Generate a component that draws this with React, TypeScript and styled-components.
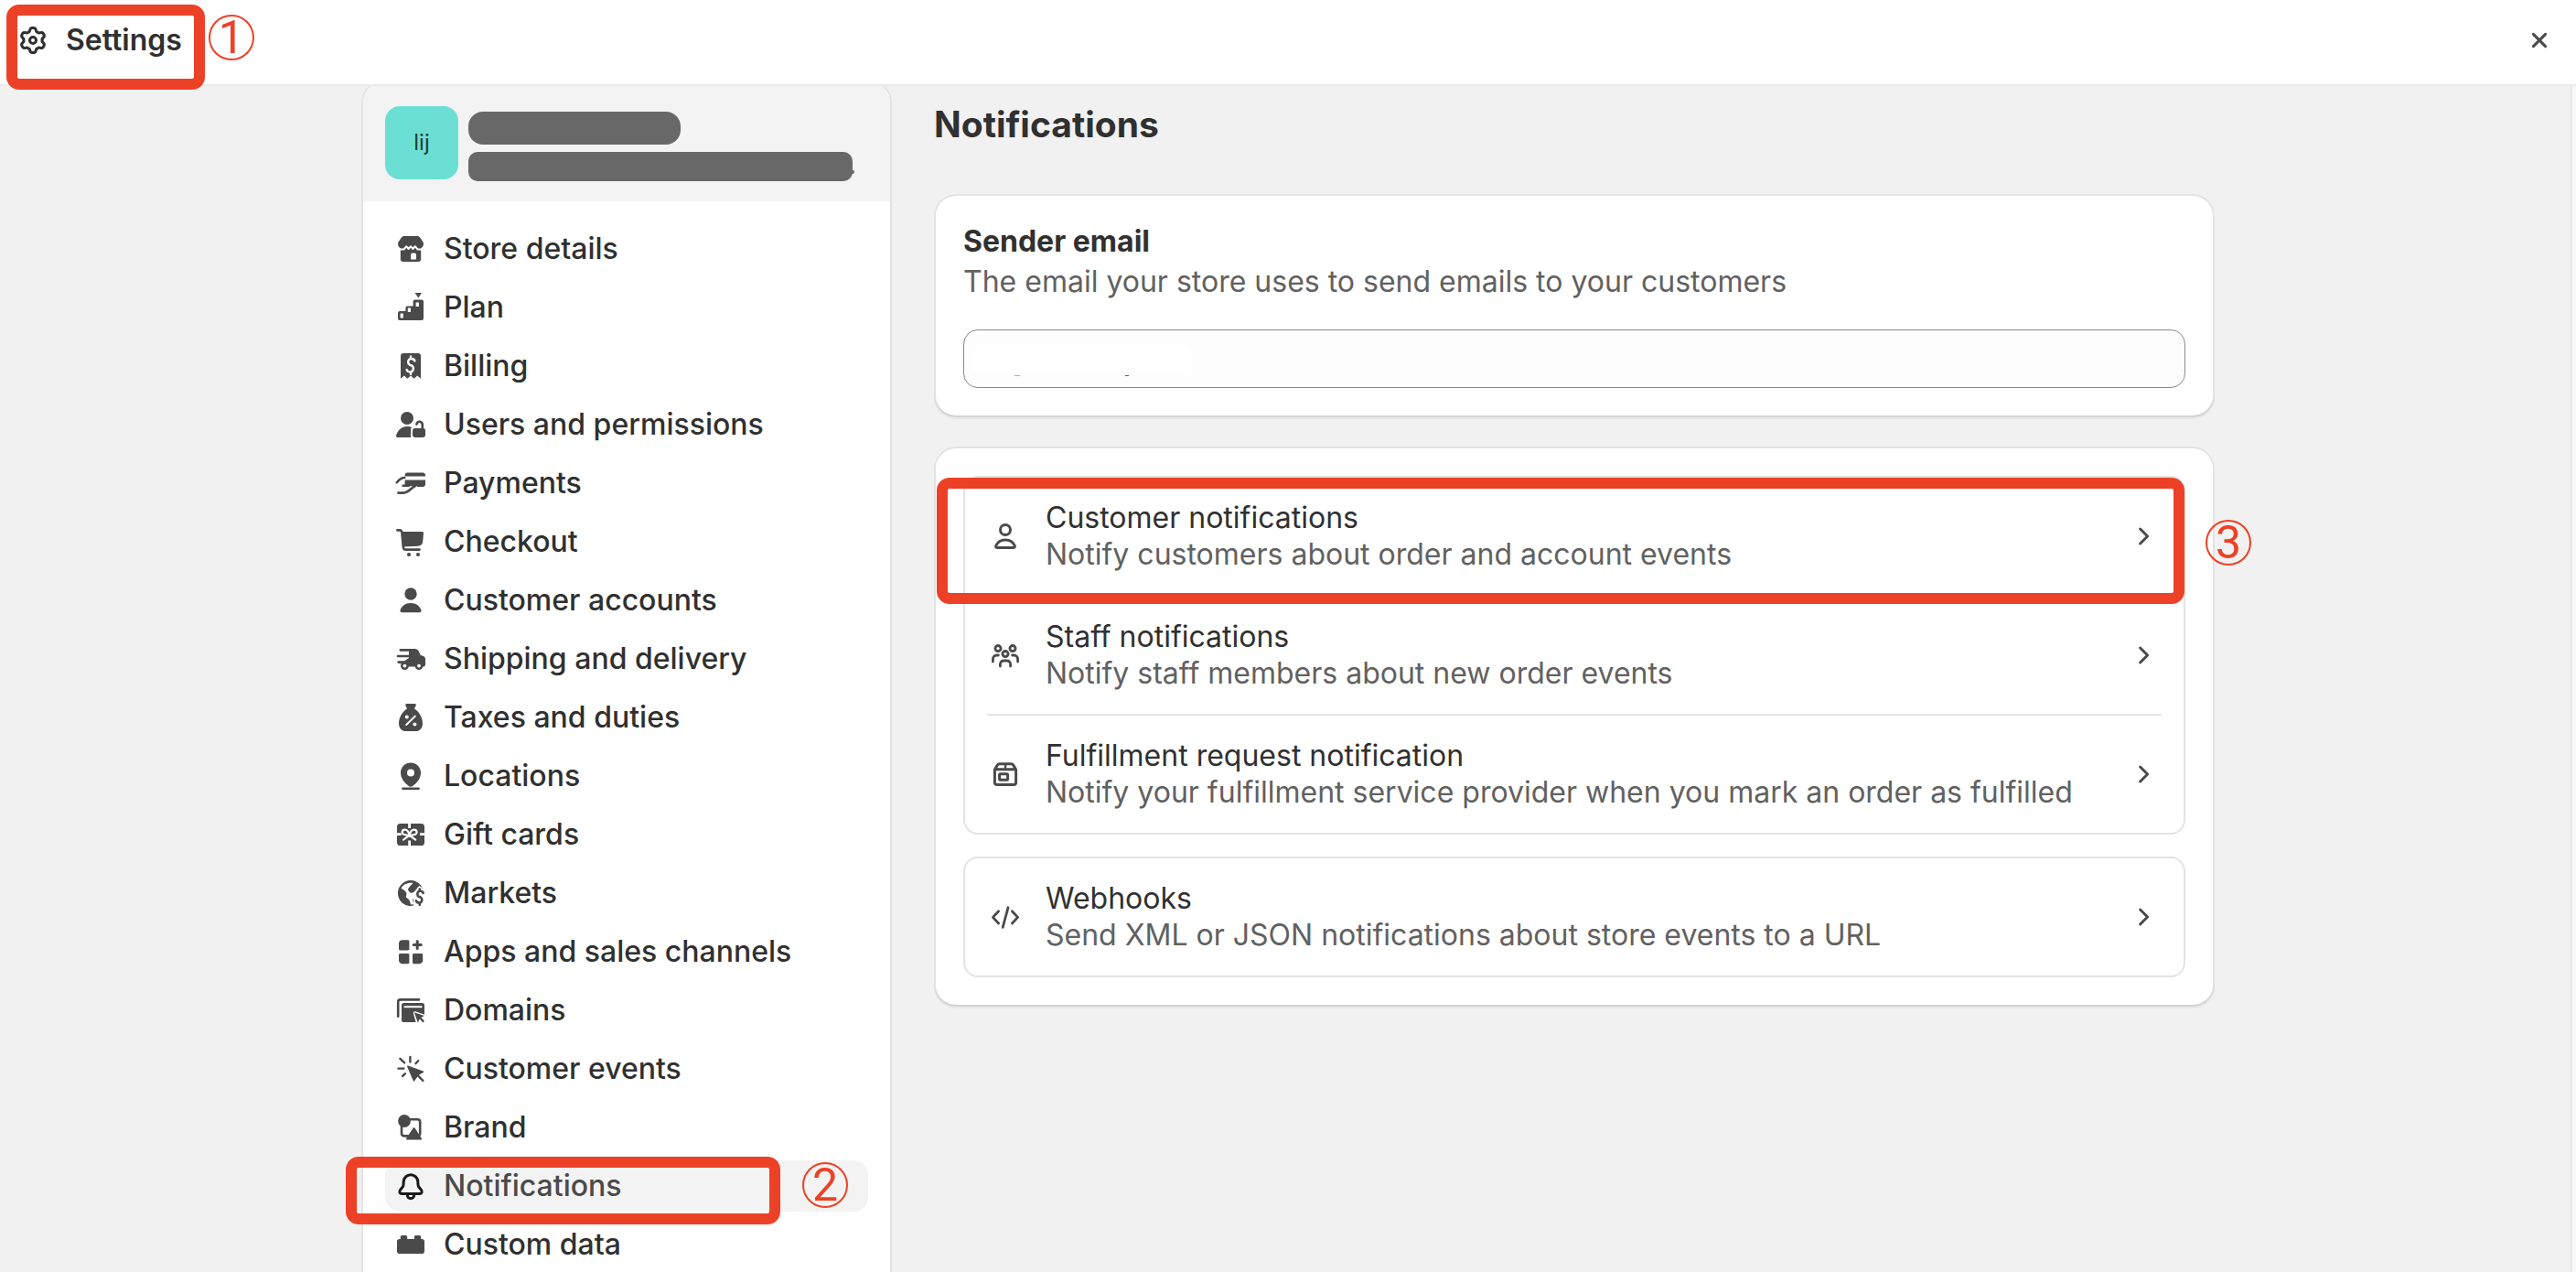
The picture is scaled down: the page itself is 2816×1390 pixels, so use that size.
import React from "react";
import styled, { createGlobalStyle, css } from "styled-components";

const color = {
  page: "#f1f1f1",
  surface: "#ffffff",
  subtle: "#f3f3f3",
  line: "#e3e3e3",
  headerLine: "#ebebeb",
  text: "#303030",
  muted: "#616161",
  icon: "#4a4a4a",
  strong: "#1a1a1a",
  mark: "#ec4126",
  redact: "#686868",
  avatar: "#6cdfd5",
};

const GlobalStyle = createGlobalStyle`
  *, *::before, *::after { box-sizing: border-box; }
  body {
    margin: 0;
    background: ${color.page};
    color: ${color.text};
    font-family: Inter, "Liberation Sans", sans-serif;
    font-size: 32px;
    line-height: 40px;
  }
  h1, h2, p, ul { margin: 0; padding: 0; }
  ul { list-style: none; }
  a { color: inherit; text-decoration: none; }
`;

/* ---------- Icons (20 unit grid) ---------- */

const Glyph = styled.svg<{ $tone?: string }>`
  display: block;
  flex: none;
  width: 40px;
  height: 40px;
  color: ${(p) => p.$tone ?? color.icon};
  fill: currentColor;
`;

const line = {
  fill: "none",
  stroke: "currentColor",
  strokeWidth: 1.5,
  strokeLinecap: "round" as const,
  strokeLinejoin: "round" as const,
};
const cut = { ...line, stroke: "#fff", strokeWidth: 1 };

const dollar = "M2.2 1.2C2 .5 1.3 0 .3 0h-.6a2 2 0 0 0 0 3.6h.6a2 2 0 0 1 0 3.6h-.6c-1 0-1.7-.5-1.9-1.2M0-1.3V0M0 7.2v1.3";

const gearPath = (() => {
  const pt = (r: number, deg: number) => {
    const a = (deg * Math.PI) / 180;
    return `${(10 + r * Math.cos(a)).toFixed(2)} ${(10 + r * Math.sin(a)).toFixed(2)}`;
  };
  let d = "";
  for (let k = 0; k < 6; k++) {
    const t = -90 + k * 60;
    d += `${k ? "L" : "M"}${pt(5.5, t - 18)}Q${pt(6.75, t - 13)} ${pt(6.75, t - 5)}L${pt(6.75, t + 5)}Q${pt(6.75, t + 13)} ${pt(5.5, t + 18)}Q${pt(4.7, t + 24)} ${pt(5.2, t + 30)}Q${pt(4.7, t + 36)} ${pt(5.5, t + 42)}`;
  }
  return d + "Z";
})();

const icons = {
  gear: (
    <>
      <path {...line} d={gearPath} />
      <circle {...line} cx="10" cy="10" r="1.75" />
    </>
  ),
  close: <path {...line} d="M6.7 6.7l6.6 6.6M13.3 6.7l-6.6 6.6" />,
  chevron: <path {...line} d="M8.3 6l4 4-4 4" />,
  store: (
    <>
      <path d="M6.4 3h7.2c.6 0 1.1.3 1.5.8l1.4 2.1c.3.4.5.9.5 1.4 0 1.500-1 2.400-2.200 2.400H5.200C4 9.700 3 8.800 3 7.300c0-.5.2-1 .5-1.400l1.400-2.100C5.300 3.300 5.800 3 6.400 3z" />
      <path d="M4.400 9h11.200v6.600c0 .8-.6 1.400-1.400 1.400H5.800c-.8 0-1.400-.6-1.400-1.400z" />
      <path {...cut} d="M4 10.300h2.200L7.600 8.600 8.800 10 10 8.600l1.200 1.400 1.200-1.400 1.400 1.700H16" />
      <path fill="#fff" d="M10 13.300a1 1 0 0 1 1-1h1a1 1 0 0 1 1 1v2.500h-3z" />
    </>
  ),
  plan: (
    <>
      <path d="M12.300 2h3.700l-1.850 2.700z" />
      <path d="M3 13a1 1 0 0 1 1-1h3.200v-1.800a1 1 0 0 1 1-1h3.100V6.700a1 1 0 0 1 1-1H16a1 1 0 0 1 1 1V16a1 1 0 0 1-1 1H4a1 1 0 0 1-1-1z" />
      <path fill="#fff" d="M4.300 13.200h1.600v2.500H4.300zM8.400 10.200H10v2.300H8.400zM12.800 7.200h1.700v2.300h-1.700z" />
    </>
  ),
  billing: (
    <>
      <path d="M5.900 3h8.200c.8 0 1.400.6 1.400 1.400v12.500l-1.900-1.700-1.800 1.700L10 15.200l-1.800 1.700-1.800-1.700-1.900 1.700V4.400C4.500 3.600 5.100 3 5.900 3z" />
      <path {...cut} strokeWidth={1.2} transform="translate(10 6)" d={dollar} />
    </>
  ),
  users: (
    <>
      <circle cx="8" cy="6.500" r="3.500" />
      <path d="M8 11c1 0 1.900.2 2.500.5-.3.400-.5.800-.5 1.300V17H3c-.8 0-1.200-.6-.9-1.300C3 13 5 11 8 11z" />
      <rect x="11" y="12" width="7" height="5" rx="1.200" />
      <path {...line} strokeWidth={1.300} d="M16.400 12.500V10.200a1.600 1.600 0 0 0-3.200-.4" />
    </>
  ),
  payments: (
    <>
      <path d="M8.200 4.200h8.400c.8 0 1.400.6 1.400 1.400v.7H6.800v-.7c0-.8.6-1.400 1.400-1.400zM6.800 8.200H18v2.400c0 .8-.6 1.400-1.400 1.400H6.800z" />
      <path {...line} strokeWidth={1.300} d="M2.400 9.600c1.300-1.700 2.400-2.600 4.200-2.600M5.800 11.400h3.600" />
      <path {...cut} strokeWidth={1.200} d="M9.800 12.200l3.200-.2" />
      <path {...line} strokeWidth={1.400} d="M3.200 15.300h2.900c2.600 0 3.900-2.600 6.600-4" />
    </>
  ),
  cart: (
    <>
      <path {...line} strokeWidth={1.300} d="M2.700 3.700h1.200c.7 0 1.200.5 1.300 1.200l.7 8c.1.800.6 1.400 1.400 1.400h7.500" />
      <path d="M5 4.500h11.200c.5 0 .8.400.8.900l-.4 4.500c-.1 1.400-1.100 2.400-2.500 2.500l-8.500.400z" />
      <circle cx="9" cy="17" r="1.050" />
      <circle cx="14" cy="17" r="1.050" />
    </>
  ),
  person: (
    <>
      <circle cx="10" cy="6.500" r="3.350" />
      <path d="M10 11.500c3 0 4.800 1.600 5.700 3.700.3.700-.2 1.400-.9 1.400H5.200c-.7 0-1.200-.7-.9-1.400.9-2.100 2.700-3.700 5.700-3.700z" />
    </>
  ),
  truck: (
    <>
      <path d="M9 4.500h3.300c.9 0 1.600.5 2 1.300l1 2.100 1.800.7c.6.300.9.800.9 1.400v3c0 .8-.5 1.300-1.300 1.300H5.500l-.8-1.800L9 9.500z" />
      <path {...line} strokeWidth={1.300} d="M4.400 5.200h6M3 8.500h7M3.300 11.800h6" />
      <circle cx="6.700" cy="13.800" r="2.200" />
      <circle cx="14.500" cy="13.800" r="2.200" />
      <circle cx="6.700" cy="13.800" r=".95" fill="#fff" />
      <circle cx="14.500" cy="13.800" r=".95" fill="#fff" />
    </>
  ),
  taxes: (
    <>
      <path d="M7.800 2.500h4.400c.6 0 .9.600.6 1.100L12 5.200c2.400 1.500 4.500 4.500 4.500 8 0 2.600-1.500 4.300-4 4.300h-5c-2.500 0-4-1.700-4-4.300 0-3.500 2.100-6.500 4.500-8l-.8-1.600c-.3-.5 0-1.100.6-1.100z" />
      <path {...cut} d="M7.600 14l4.800-4.700" />
      <circle cx="7.900" cy="9.700" r="1" fill="#fff" />
      <circle cx="12.200" cy="13.700" r="1" fill="#fff" />
    </>
  ),
  pin: (
    <>
      <path
        fillRule="evenodd"
        d="M10 2.700c3.100 0 5.500 2.400 5.500 5.500 0 3.200-2.300 5.600-4.300 7.200-.7.600-1.700.6-2.400 0-2-1.600-4.300-4-4.300-7.200 0-3.100 2.400-5.500 5.500-5.500zm0 3.600a2 2 0 1 0 0 4 2 2 0 0 0 0-4z"
      />
      <path {...line} strokeWidth={1.300} d="M5.700 16.900h8.600" />
    </>
  ),
  gift: (
    <>
      <rect x="2.500" y="4" width="15" height="12" rx="1.800" />
      <path {...cut} strokeWidth={1.400} strokeLinecap="butt" d="M9.300 4v2.500M9.300 13.200V16M2.500 9.800h2.300M15 9.800h2.500" />
      <path {...cut} strokeWidth={1.100} d="M9.300 10.400C8.800 8 7.900 7.300 6.800 7.300c-.9 0-1.500.6-1.500 1.500 0 1.300 1.700 1.600 4 1.600zM9.300 10.400c.5-2.400 1.400-3.100 2.500-3.100.9 0 1.500.6 1.500 1.500 0 1.300-1.700 1.600-4 1.600zM9.300 10.400L6 12.800M9.300 10.400l3.300 2.400" />
    </>
  ),
  markets: (
    <>
      <path d="M10 3a7 7 0 1 0 1.600 13.800c-.5-1.300.2-2 .5-2.500-.9-1-1-3 .4-4.200.6-2 3-2.400 4.300-1.300A7 7 0 0 0 10 3z" />
      <path fill="#fff" d="M11.300 4.400L9 7c-.4.500-.6 1-.3 1.600l.9 1c.6.500 1.800.2 2.200-.3l3-3.400c.4.400.8 1 1 1.500L13 10.500l-1.500 2c-.6 1.200-.4 2.500.7 3.500l-2.200.3c-.4-1.800-.7-3-2-3.600-.7-.4-.7-1-.4-1.700.3-.9-.1-1.800-.8-2.300L4.700 7.300C5.700 5.200 8.500 4 11.300 4.400z" />
      <path d="M12.400 4.700l2.200 1.200-3.200 3.600-1.700-1.200z" />
      <path {...line} strokeWidth={3.200} stroke="#fff" transform="translate(14.900 8.900) scale(.88)" d={dollar} />
      <path {...line} strokeWidth={1.500} transform="translate(14.900 8.900) scale(.88)" d={dollar} />
    </>
  ),
  apps: (
    <>
      <path d="M5.300 3.600h3.200c.4 0 .7.300.7.700v4.200c0 .4-.3.700-.7.700H4.200a.7.700 0 0 1-.7-.7V5.400c0-1 .8-1.800 1.800-1.800z" />
      <path d="M4.200 11h4.300c.4 0 .7.300.7.700v4.200c0 .4-.3.700-.7.700H5.300c-1 0-1.800-.8-1.800-1.800v-3.100c0-.4.300-.7.700-.7zM11.700 11h4.200c.4 0 .7.300.7.700v3.100c0 1-.8 1.800-1.800 1.800h-3.100a.7.700 0 0 1-.7-.7v-4.200c0-.4.300-.7.700-.7z" />
      <path {...line} d="M13.600 4.300v4M11.600 6.300h4" />
    </>
  ),
  domains: (
    <>
      <path {...line} strokeWidth={1.300} d="M3.100 13.400V5.400c0-.7.500-1.200 1.200-1.200h10.200" />
      <rect x="5" y="6" width="12.500" height="10.500" rx="1.300" />
      <path {...cut} strokeLinecap="butt" d="M6.300 8.100h9.900" />
      <path fill="#fff" stroke="#fff" strokeWidth={1.800} strokeLinejoin="round" d="M12.300 11.500l5.700 2v3.300h-4.200z" />
      <path d="M11.900 11.100l5.500 1.900-1.700 1 1.800 1.900-.8.800-1.800-1.900-1 1.900z" />
    </>
  ),
  events: (
    <>
      <path strokeLinejoin="round" stroke="currentColor" strokeWidth=".8" d="M8.400 8.600l8.300 3-2.700 1.500-2.300 3.300z" />
      <path {...line} strokeWidth={1.200} d="M13.500 13.200l3.200 3.300M9.700 3.500v2.700M4.200 4.400l2.400 2.300M14.100 5.600l-1.400 1.500M3.200 9.800h3M5.500 14l1.500-1.400" />
    </>
  ),
  brand: (
    <>
      <path {...line} strokeWidth={1.300} d="M5 9v4.300c0 .8.600 1.400 1.400 1.400h7.300c.8 0 1.400-.6 1.400-1.400V7c0-.8-.6-1.400-1.400-1.400H9" />
      <circle cx="6.500" cy="6.500" r="3.450" />
      <path strokeLinejoin="round" stroke="currentColor" strokeWidth="1" d="M11.800 10.500l3.700 5.800H8z" />
    </>
  ),
  bell: (
    <>
      <path {...line} d="M10 3.900a3.900 3.900 0 0 0-3.900 3.700L6 9.300c0 .6-.3 1.200-.7 1.600l-1 1.200c-.9 1-.3 2.100.9 2.100h9.600c1.200 0 1.800-1.100.9-2.100l-1-1.200a2.700 2.700 0 0 1-.7-1.600l-.1-1.700A3.900 3.900 0 0 0 10 3.900z" />
      <path {...line} d="M8.200 14.500v.6a1.800 1.800 0 0 0 3.600 0v-.6" />
    </>
  ),
  data: (
    <path d="M5.300 5h1.900c.5 0 .9.400.9.900V7h3.800V5.900c0-.5.400-.9.900-.9h1.900c.5 0 .9.400.9.900V7h.6c.7 0 1.300.6 1.300 1.300v5.400c0 .7-.6 1.300-1.300 1.300H3.800c-.7 0-1.300-.6-1.300-1.300V8.300C2.500 7.600 3.100 7 3.800 7h.6V5.900c0-.5.400-.9.900-.9z" />
  ),
  profile: (
    <>
      <circle {...line} cx="10" cy="6.500" r="2.750" />
      <path {...line} d="M10 12c2.500 0 4.200 1.200 5.100 3.100.300.600-.1 1.200-.8 1.200H5.700c-.7 0-1.100-.6-.8-1.200C5.800 13.200 7.500 12 10 12z" />
    </>
  ),
  team: (
    <>
      <circle {...line} strokeWidth={1.400} cx="6" cy="6.300" r="1.550" />
      <circle {...line} strokeWidth={1.400} cx="14" cy="6.300" r="1.550" />
      <circle {...line} strokeWidth={1.400} cx="10" cy="9.300" r="1.550" />
      <path {...line} strokeWidth={1.400} d="M3.200 13.500v-1.300c0-1.200.9-2.200 2.100-2.200h.9M16.800 13.500v-1.300c0-1.200-.9-2.200-2.100-2.200h-.9M7.200 16v-1c0-1.200.9-2 2-2h1.600c1.100 0 2 .8 2 2v1" />
    </>
  ),
  package: (
    <>
      <path {...line} d="M4.200 7.500v7c0 .8.500 1.300 1.300 1.300h9c.8 0 1.300-.5 1.300-1.300v-7l-1.300-2.300c-.3-.5-.7-.8-1.300-.8H6.800c-.6 0-1 .3-1.300.8zM4.400 7.400h11.200" />
      <path {...line} strokeWidth={1.200} d="M10 4.500v2.800" />
      <rect {...line} x="6.800" y="9.900" width="4.500" height="3.200" rx=".4" />
    </>
  ),
  code: <path {...line} strokeWidth={1.400} d="M6.300 6.900L3.200 10.200l3.100 3.300M13.700 6.900l3.100 3.300-3.100 3.300M11.500 4.900L8.600 15.700" />,
};

type IconName = keyof typeof icons;

const Icon = ({ name, tone }: { name: IconName; tone?: string }) => (
  <Glyph viewBox="0 0 20 20" aria-hidden="true" $tone={tone}>
    {icons[name]}
  </Glyph>
);

/* ---------- Walkthrough markers ---------- */

const Frame = styled.span<{ $inset: string }>`
  position: absolute;
  inset: ${(p) => p.$inset};
  z-index: 2;
  border: 12px solid ${color.mark};
  border-radius: 14px;
  pointer-events: none;
`;

const Step = styled.span<{ $top: string; $left: string }>`
  position: absolute;
  top: ${(p) => p.$top};
  left: ${(p) => p.$left};
  z-index: 2;
  display: flex;
  align-items: center;
  justify-content: center;
  width: 50px;
  height: 50px;
  border: 2px solid ${color.mark};
  border-radius: 50%;
  color: ${color.mark};
  font-family: Roboto, "Liberation Sans", sans-serif;
  font-size: 50px;
  font-weight: 400;
  line-height: 46px;
`;

/* ---------- Shell ---------- */

const Shell = styled.div`
  display: flex;
  flex-direction: column;
  height: 100vh;
  overflow: hidden;
`;

const Header = styled.header`
  position: relative;
  z-index: 1;
  display: flex;
  flex: none;
  justify-content: space-between;
  padding: 24px 20px 28px 16px;
  border-bottom: 2px solid ${color.headerLine};
  background: ${color.surface};
`;

const HeaderTitle = styled.div`
  position: relative;
  display: flex;
  gap: 16px;
  font-weight: 600;
`;

const CloseButton = styled.button`
  padding: 0;
  border: 0;
  background: none;
  cursor: pointer;
`;

const Body = styled.div`
  display: flex;
  flex: 1;
  min-height: 0;
`;

const Scroller = styled.div`
  flex: 1;
  padding-left: 6px;
  overflow-y: auto;
  scrollbar-width: none;
`;

const Track = styled.div`
  flex: none;
  width: 6px;
  border-left: 2px solid #e8e8e8;
  background: #fafafa;
`;

const Columns = styled.div`
  display: flex;
  gap: 46px;
  max-width: 2026px;
  margin: 0 auto;
`;

/* ---------- Sidebar ---------- */

const Sidebar = styled.aside`
  flex: none;
  width: 580px;
  margin-top: -6px;
  border: 2px solid ${color.line};
  border-radius: 24px;
  background: ${color.surface};
`;

const Shop = styled.div`
  display: flex;
  align-items: flex-start;
  gap: 11px;
  padding: 26px 24px 24px;
  border-radius: 22px 22px 0 0;
  background: ${color.subtle};
`;

const Avatar = styled.div`
  display: flex;
  align-items: center;
  justify-content: center;
  width: 80px;
  height: 80px;
  border-radius: 16px;
  background: ${color.avatar};
  color: #1c3d3a;
  font-size: 24px;
`;

const ShopLines = styled.div`
  display: flex;
  flex-direction: column;
  gap: 8px;
  height: 80px;
  padding-top: 6px;
`;

const Redacted = styled.span<{ $width: number; $height: number; $radius: number; $tail?: boolean }>`
  position: relative;
  flex: none;
  width: ${(p) => p.$width}px;
  height: ${(p) => p.$height}px;
  border-radius: ${(p) => p.$radius}px;
  background: ${color.redact};
  ${(p) =>
    p.$tail &&
    css`
      &::after {
        content: "";
        position: absolute;
        right: -2px;
        bottom: 8px;
        width: 5px;
        height: 4px;
        border-radius: 2px;
        background: ${color.redact};
      }
    `}
`;

const NavPanel = styled.nav`
  padding: 24px;
`;

const NavList = styled.ul`
  display: flex;
  flex-direction: column;
  gap: 8px;
`;

const NavLink = styled.a<{ $active?: boolean }>`
  position: relative;
  display: flex;
  align-items: center;
  gap: 16px;
  height: 56px;
  padding: 0 8px;
  border-radius: 16px;
  background: ${(p) => (p.$active ? color.subtle : "transparent")};
  color: ${(p) => (p.$active ? color.icon : color.text)};
  font-weight: 550;
`;

/* ---------- Main ---------- */

const Main = styled.main`
  display: flex;
  flex: 1;
  flex-direction: column;
  gap: 32px;
  min-width: 0;
  padding: 18px 0 32px;
`;

const PageTitle = styled.h1`
  padding-bottom: 20px;
  font-size: 39px;
  font-weight: 650;
  line-height: 48px;
`;

const Card = styled.section`
  display: flex;
  flex-direction: column;
  gap: 24px;
  padding: 32px;
  border-radius: 24px;
  background: ${color.surface};
  box-shadow:
    inset 0 -2px 0 #d4d4d4,
    inset 0 0 0 2px ${color.line},
    0 2px 0 #e8e8e8;
`;

const Field = styled.div`
  display: flex;
  flex-direction: column;
  gap: 4px;
`;

const FieldLabel = styled.label`
  font-weight: 650;
`;

const Hint = styled.p`
  color: ${color.muted};
`;

const InputWrap = styled.div`
  position: relative;
  display: flex;
  padding-top: 28px;
`;

const EmailInput = styled.input`
  flex: 1;
  min-width: 0;
  height: 64px;
  padding: 0 24px;
  border: 1px solid #8a8a8a;
  border-radius: 16px;
  background: #fdfdfd;
  color: ${color.text};
  font: inherit;
`;

const Erased = styled.span`
  position: absolute;
  left: 10px;
  bottom: 14px;
  width: 240px;
  height: 34px;
  border-radius: 8px;
  background: ${color.surface};

  &::before,
  &::after {
    content: "";
    position: absolute;
    bottom: -1px;
    left: 46px;
    width: 6px;
    height: 1px;
    background: #b0b0b0;
  }
  &::after {
    left: 167px;
    width: 4px;
    background: #606060;
  }
`;

const Group = styled.ul`
  border: 2px solid ${color.line};
  border-radius: 16px;
`;

const GroupItem = styled.li`
  & + &::before {
    content: "";
    display: block;
    height: 2px;
    margin: 0 24px;
    background: ${color.line};
  }
`;

const RowLink = styled.a`
  position: relative;
  display: flex;
  align-items: center;
  gap: 24px;
  padding: 24px;
`;

const RowText = styled.span`
  display: flex;
  flex: 1;
  flex-direction: column;
`;

const RowHint = styled.span`
  color: ${color.muted};
`;

const nav: { icon: IconName; label: string }[] = [
  { icon: "store", label: "Store details" },
  { icon: "plan", label: "Plan" },
  { icon: "billing", label: "Billing" },
  { icon: "users", label: "Users and permissions" },
  { icon: "payments", label: "Payments" },
  { icon: "cart", label: "Checkout" },
  { icon: "person", label: "Customer accounts" },
  { icon: "truck", label: "Shipping and delivery" },
  { icon: "taxes", label: "Taxes and duties" },
  { icon: "pin", label: "Locations" },
  { icon: "gift", label: "Gift cards" },
  { icon: "markets", label: "Markets" },
  { icon: "apps", label: "Apps and sales channels" },
  { icon: "domains", label: "Domains" },
  { icon: "events", label: "Customer events" },
  { icon: "brand", label: "Brand" },
  { icon: "bell", label: "Notifications" },
  { icon: "data", label: "Custom data" },
];

type RowData = { icon: IconName; title: string; hint: string; marked?: boolean };

const groups: RowData[][] = [
  [
    {
      icon: "profile",
      title: "Customer notifications",
      hint: "Notify customers about order and account events",
      marked: true,
    },
    { icon: "team", title: "Staff notifications", hint: "Notify staff members about new order events" },
    {
      icon: "package",
      title: "Fulfillment request notification",
      hint: "Notify your fulfillment service provider when you mark an order as fulfilled",
    },
  ],
  [{ icon: "code", title: "Webhooks", hint: "Send XML or JSON notifications about store events to a URL" }],
];

const Row = ({ row }: { row: RowData }) => (
  <GroupItem>
    <RowLink href="#">
      <Icon name={row.icon} />
      <RowText>
        <span>{row.title}</span>
        <RowHint>{row.hint}</RowHint>
      </RowText>
      <Icon name="chevron" />
      {row.marked && (
        <>
          <Frame $inset="0 -1px -10px -31px" />
          <Step $top="46px" $left="calc(100% + 24px)">
            3
          </Step>
        </>
      )}
    </RowLink>
  </GroupItem>
);

export default function App() {
  return (
    <Shell>
      <GlobalStyle />
      <Header>
        <HeaderTitle>
          <Icon name="gear" tone={color.text} />
          <span>Settings</span>
          <Frame $inset="-19px -25px -34px -9px" />
          <Step $top="-8px" $left="calc(100% + 29px)">
            1
          </Step>
        </HeaderTitle>
        <CloseButton type="button" aria-label="Close">
          <Icon name="close" />
        </CloseButton>
      </Header>
      <Body>
        <Scroller>
          <Columns>
            <Sidebar>
              <Shop>
                <Avatar>lij</Avatar>
                <ShopLines>
                  <Redacted $width={232} $height={36} $radius={16} />
                  <Redacted $width={420} $height={32} $radius={10} $tail />
                </ShopLines>
              </Shop>
              <NavPanel aria-label="Settings">
                <NavList>
                  {nav.map(({ icon, label }) => {
                    const active = label === "Notifications";
                    return (
                      <li key={label}>
                        <NavLink href="#" $active={active} aria-current={active ? "page" : undefined}>
                          <Icon name={icon} tone={active ? color.strong : undefined} />
                          <span>{label}</span>
                          {active && (
                            <>
                              <Frame $inset="-4px 96px -14px -43px" />
                              <Step $top="2px" $left="calc(100% - 72px)">
                                2
                              </Step>
                            </>
                          )}
                        </NavLink>
                      </li>
                    );
                  })}
                </NavList>
              </NavPanel>
            </Sidebar>
            <Main>
              <PageTitle>Notifications</PageTitle>
              <Card>
                <Field>
                  <FieldLabel htmlFor="sender-email">Sender email</FieldLabel>
                  <Hint id="sender-hint">The email your store uses to send emails to your customers</Hint>
                  <InputWrap>
                    <EmailInput id="sender-email" type="email" aria-describedby="sender-hint" />
                    <Erased />
                  </InputWrap>
                </Field>
              </Card>
              <Card>
                {groups.map((rows) => (
                  <Group key={rows[0].title}>
                    {rows.map((row) => (
                      <Row key={row.title} row={row} />
                    ))}
                  </Group>
                ))}
              </Card>
            </Main>
          </Columns>
        </Scroller>
        <Track />
      </Body>
    </Shell>
  );
}
